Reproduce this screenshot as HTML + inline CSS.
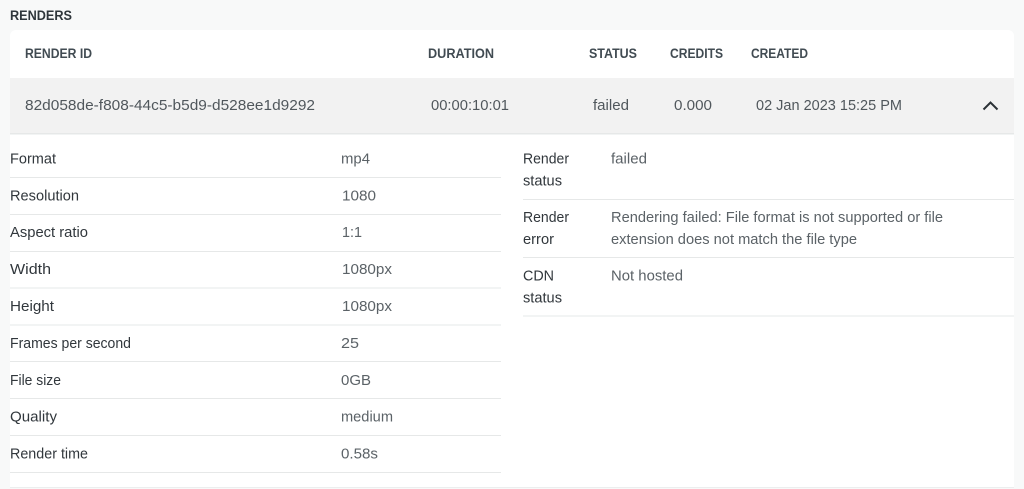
<!DOCTYPE html>
<html>
<head>
<meta charset="utf-8">
<style>
html,body{margin:0;padding:0;background:#f8f9f9;width:1024px;height:489px;overflow:hidden}
svg{display:block;position:absolute;left:0;top:0}
text{font-family:"Liberation Sans",sans-serif;font-size:14.5px;white-space:pre}
.h{font-size:13.4px;font-weight:700;fill:#414b52}
.l{fill:#31373c}
.v{fill:#5b6267}
.r{fill:#50575c}
</style>
</head>
<body>
<svg width="1024" height="489" viewBox="0 0 1024 489" xmlns="http://www.w3.org/2000/svg">
<rect width="1024" height="489" fill="#f8f9f9"/>
<path d="M10 36a6 6 0 0 1 6-6H1008a6 6 0 0 1 6 6V487H10Z" fill="#fff"/>
<rect x="10" y="487" width="1004" height="1" fill="#eceeee"/>
<rect x="10" y="78" width="1004" height="55" fill="#f2f2f2"/>
<rect x="10" y="133" width="1004" height="1.5" fill="#e6e8e8"/>

<g fill="#e6e8e8">
<rect x="10" y="177" width="491" height="1"/>
<rect x="10" y="214" width="491" height="1"/>
<rect x="10" y="251" width="491" height="1"/>
<rect x="10" y="287.5" width="491" height="1"/>
<rect x="10" y="324.5" width="491" height="1"/>
<rect x="10" y="361" width="491" height="1"/>
<rect x="10" y="398" width="491" height="1"/>
<rect x="10" y="435" width="491" height="1"/>
<rect x="10" y="472" width="491" height="1"/>
<rect x="523" y="199" width="491" height="1"/>
<rect x="523" y="257" width="491" height="1"/>
<rect x="523" y="315.5" width="491" height="1"/>
</g>

<text class="h" style="fill:#2f363b" x="10" y="20" textLength="62" lengthAdjust="spacingAndGlyphs">RENDERS</text>

<text class="h" x="25" y="58" textLength="67" lengthAdjust="spacingAndGlyphs">RENDER ID</text>
<text class="h" x="428" y="58" textLength="66" lengthAdjust="spacingAndGlyphs">DURATION</text>
<text class="h" x="589" y="58" textLength="48" lengthAdjust="spacingAndGlyphs">STATUS</text>
<text class="h" x="670" y="58" textLength="53" lengthAdjust="spacingAndGlyphs">CREDITS</text>
<text class="h" x="751" y="58" textLength="57" lengthAdjust="spacingAndGlyphs">CREATED</text>

<text class="r" x="25" y="110" textLength="290" lengthAdjust="spacingAndGlyphs">82d058de-f808-44c5-b5d9-d528ee1d9292</text>
<text class="r" x="431" y="110" textLength="78" lengthAdjust="spacingAndGlyphs">00:00:10:01</text>
<text class="r" x="593" y="110" textLength="36" lengthAdjust="spacingAndGlyphs">failed</text>
<text class="r" x="674" y="110" textLength="38" lengthAdjust="spacingAndGlyphs">0.000</text>
<text class="r" x="756" y="110" textLength="146" lengthAdjust="spacingAndGlyphs">02 Jan 2023 15:25 PM</text>
<path d="M983.5 109.5L990.5 102.5L997.5 109.5" fill="none" stroke="#2b3136" stroke-width="2"/>

<text class="l" x="10" y="163.5" textLength="46" lengthAdjust="spacingAndGlyphs">Format</text>
<text class="v" x="341" y="163.5" textLength="29" lengthAdjust="spacingAndGlyphs">mp4</text>
<text class="l" x="10" y="200.5" textLength="69" lengthAdjust="spacingAndGlyphs">Resolution</text>
<text class="v" x="342" y="200.5" textLength="34" lengthAdjust="spacingAndGlyphs">1080</text>
<text class="l" x="10" y="237" textLength="78" lengthAdjust="spacingAndGlyphs">Aspect ratio</text>
<text class="v" x="342" y="237" textLength="20" lengthAdjust="spacingAndGlyphs">1:1</text>
<text class="l" x="10" y="274" textLength="41" lengthAdjust="spacingAndGlyphs">Width</text>
<text class="v" x="342" y="274" textLength="50" lengthAdjust="spacingAndGlyphs">1080px</text>
<text class="l" x="10" y="311" textLength="44" lengthAdjust="spacingAndGlyphs">Height</text>
<text class="v" x="342" y="311" textLength="50" lengthAdjust="spacingAndGlyphs">1080px</text>
<text class="l" x="10" y="348" textLength="121" lengthAdjust="spacingAndGlyphs">Frames per second</text>
<text class="v" x="341" y="348" textLength="18" lengthAdjust="spacingAndGlyphs">25</text>
<text class="l" x="10" y="385" textLength="51" lengthAdjust="spacingAndGlyphs">File size</text>
<text class="v" x="341" y="385" textLength="30" lengthAdjust="spacingAndGlyphs">0GB</text>
<text class="l" x="10" y="421.5" textLength="47" lengthAdjust="spacingAndGlyphs">Quality</text>
<text class="v" x="341" y="421.5" textLength="52" lengthAdjust="spacingAndGlyphs">medium</text>
<text class="l" x="10" y="458.5" textLength="78" lengthAdjust="spacingAndGlyphs">Render time</text>
<text class="v" x="341" y="458.5" textLength="37" lengthAdjust="spacingAndGlyphs">0.58s</text>

<text class="l" x="523" y="163.5" textLength="46" lengthAdjust="spacingAndGlyphs">Render</text>
<text class="l" x="523" y="185.5" textLength="39" lengthAdjust="spacingAndGlyphs">status</text>
<text class="v" x="611" y="163.5" textLength="36" lengthAdjust="spacingAndGlyphs">failed</text>
<text class="l" x="523" y="222" textLength="46" lengthAdjust="spacingAndGlyphs">Render</text>
<text class="l" x="523" y="244" textLength="31" lengthAdjust="spacingAndGlyphs">error</text>
<text class="v" x="611" y="222" textLength="332" lengthAdjust="spacingAndGlyphs">Rendering failed: File format is not supported or file</text>
<text class="v" x="611" y="244" textLength="246" lengthAdjust="spacingAndGlyphs">extension does not match the file type</text>
<text class="l" x="523" y="280.5" textLength="31" lengthAdjust="spacingAndGlyphs">CDN</text>
<text class="l" x="523" y="302.5" textLength="39" lengthAdjust="spacingAndGlyphs">status</text>
<text class="v" x="611" y="280.5" textLength="72" lengthAdjust="spacingAndGlyphs">Not hosted</text>
</svg>
</body>
</html>
